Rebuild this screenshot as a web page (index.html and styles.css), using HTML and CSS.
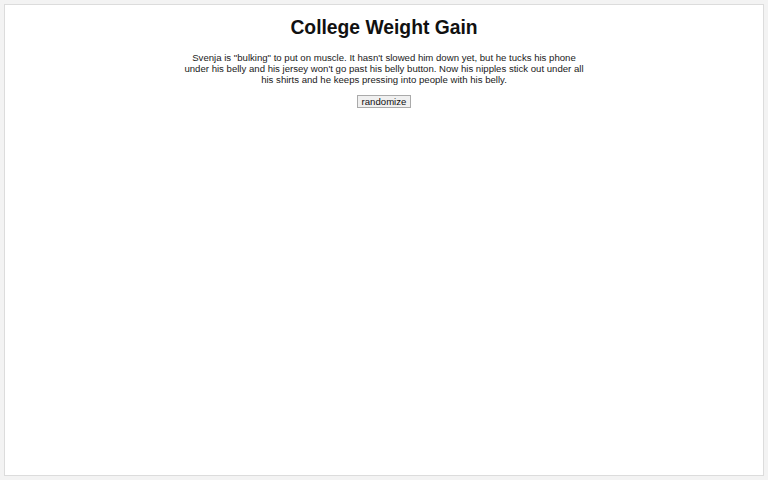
FILE: index.html
```html
<!DOCTYPE html>
<html lang="en">
<head>
    <meta charset="UTF-8">
    <meta name="viewport" content="width=device-width, initial-scale=1.0">
    <title>College Weight Gain</title>
    <link rel="stylesheet" href="styles.css">
</head>
<body>
    <div class="page">
        <h1>College Weight Gain</h1>
        <p class="story">Svenja is "bulking" to put on muscle. It hasn't slowed him down yet, but he tucks his phone under his belly and his jersey won't go past his belly button. Now his nipples stick out under all his shirts and he keeps pressing into people with his belly.</p>
        <button type="button" class="randomize">randomize</button>
    </div>
</body>
</html>
```

FILE: styles.css
```css
body {
    font-family: "Liberation Sans", Arial, sans-serif;
    margin: 0;
    padding: 4px;
    background-color: #f3f3f3;
}

.page {
    box-sizing: border-box;
    height: 472px;
    background-color: white;
    border: 1px solid #dcdcdc;
    text-align: center;
    padding-top: 12px;
}

h1 {
    font-size: 19.3px;
    margin: 0 0 13px;
    color: #111;
}

.story {
    max-width: 402px;
    margin: 0 auto 6px;
    font-size: 9.6px;
    line-height: 11px;
    color: #1a1a1a;
}

.randomize {
    font-family: "Liberation Sans", Arial, sans-serif;
    font-size: 9.6px;
    line-height: 11px;
    padding: 0 4px;
    background-color: #f0f0f0;
    border: 1px solid #aaa;
    border-radius: 0;
    color: #111;
}
```
